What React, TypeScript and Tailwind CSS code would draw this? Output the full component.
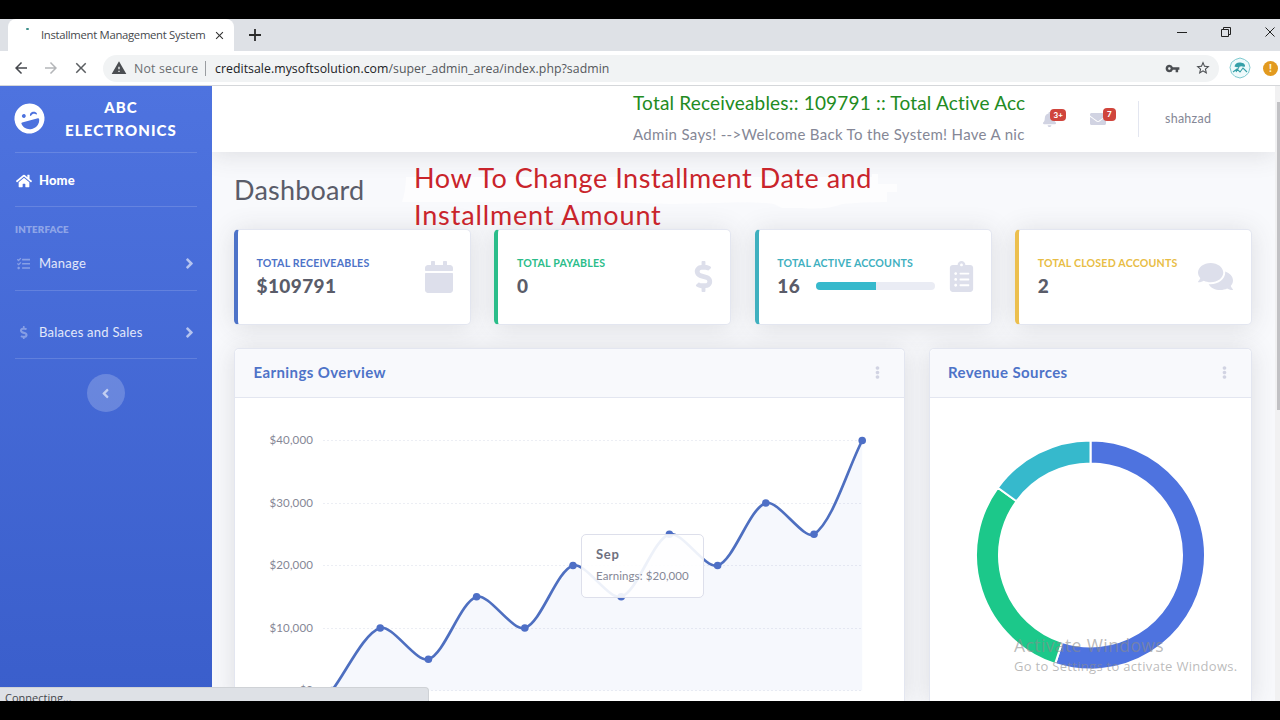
import type { ReactNode } from "react";
import clsx from "clsx";
import {
  FaAngleLeft,
  FaAngleRight,
  FaBell,
  FaCalendar,
  FaClipboardList,
  FaComments,
  FaDollarSign,
  FaEllipsisV,
  FaEnvelope,
  FaHome,
  FaLaughWink,
  FaTasks,
} from "react-icons/fa";
import { MdArrowBack, MdArrowForward, MdClose, MdStarBorder, MdVpnKey, MdWarning } from "react-icons/md";

const earnings = [0, 10, 5, 15, 10, 20, 15, 25, 20, 30, 25, 40];

const CHART = { left: 97, top: 42.5, bottom: 292.5, step: 48.2 };

function chartPoints() {
  return earnings.map((v, i) => ({
    x: CHART.left + i * CHART.step,
    y: CHART.bottom - (v / 40) * (CHART.bottom - CHART.top),
  }));
}

// Smooth curve through the points, control points kept inside the plot area
function curvePath(tension = 0.3) {
  const pts = chartPoints();
  const clamp = (y: number) => Math.min(CHART.bottom, Math.max(CHART.top, y));
  const ctrl = pts.map((p, i) => {
    const prev = pts[i - 1] ?? p;
    const next = pts[i + 1] ?? p;
    const d01 = Math.hypot(p.x - prev.x, p.y - prev.y);
    const d12 = Math.hypot(next.x - p.x, next.y - p.y);
    const fa = (tension * d01) / (d01 + d12);
    const fb = (tension * d12) / (d01 + d12);
    return {
      in: [p.x - fa * (next.x - prev.x), clamp(p.y - fa * (next.y - prev.y))],
      out: [p.x + fb * (next.x - prev.x), clamp(p.y + fb * (next.y - prev.y))],
    };
  });
  return pts
    .map((p, i) => (i === 0 ? `M${p.x},${p.y}` : `C${ctrl[i - 1].out} ${ctrl[i].in} ${p.x},${p.y}`))
    .join(" ");
}

function BrowserTabs() {
  return (
    <div className="flex h-8 items-start bg-[#dee1e6] pl-2 font-['Open_Sans',sans-serif]">
      <div className="relative flex h-8 w-[226px] items-center rounded-t-lg bg-white pl-[33px]">
        <span className="absolute left-[18px] top-[9px] h-[2px] w-[3px] rounded-full bg-[#3d8f8a]" />
        <span className="whitespace-nowrap text-[11.3px] tracking-[-0.3px] text-[#45484c]">
          Installment Management System
        </span>
        <MdClose className="absolute left-[205px] top-[10px] size-[13px] text-[#333]" />
      </div>
      <svg className="ml-[15px] mt-[10px] size-3" viewBox="0 0 12 12" stroke="#2b2b2b" strokeWidth="1.8">
        <path d="M6 0v12M0 6h12" />
      </svg>
      <div className="ml-auto mt-[7px] flex items-center gap-[34px] pr-[5px]">
        <svg className="h-3 w-[10px]" viewBox="0 0 10 12" stroke="#222">
          <path d="M0 6.5h10" />
        </svg>
        <svg className="size-[10px]" viewBox="0 0 10 10" fill="none" stroke="#222">
          <path d="M.5 2.5h7v7h-7zM2.5 2.5v-2h7v7h-2" />
        </svg>
        <svg className="size-[10px]" viewBox="0 0 10 10" stroke="#222">
          <path d="M.5.5l9 9M9.5.5l-9 9" />
        </svg>
      </div>
    </div>
  );
}

function ExtensionBadge() {
  return (
    <svg className="size-[22px] shrink-0" viewBox="0 0 22 22" fill="none">
      <path
        d="M11 1l4.5 1.5L19.5 5.5 21 10.5 19.5 16 15.5 19.5 11 21 6 19.5 2.5 16 1 10.5 2.5 5.5 6.5 2.5z"
        fill="#eefafb"
        stroke="#6fc3ca"
        strokeWidth="0.9"
      />
      <path d="M5.5 9.5C6 6 9 5 11.5 5.5c3 .2 5 2 4.5 4-2 .8-3-.6-4.5 0-2 .8-4 1-6 0z" fill="#35a0a8" />
      <path d="M4 15l4-3 3 3 3-4 4 4M10 10l-3 5" stroke="#35a0a8" strokeWidth="1.1" />
    </svg>
  );
}

function AddressBar() {
  return (
    <div className="flex h-[35px] items-center border-b border-[#d5d7da] bg-white font-['Open_Sans',sans-serif]">
      <div className="flex w-[103px] items-center gap-3 pl-3">
        <MdArrowBack className="size-[18px] text-[#45484d]" />
        <MdArrowForward className="size-[18px] text-[#b4b6b9]" />
        <MdClose className="size-[18px] text-[#5a5d61]" />
      </div>
      <div className="flex h-[27px] w-[1116px] items-center rounded-full bg-[#f1f3f4] pl-2">
        <MdWarning className="size-4 text-[#4b4e52]" />
        <span className="ml-[7px] w-[65px] whitespace-nowrap pt-[2px] text-[12.3px] tracking-[0.2px] text-[#6a6d71]">
          Not secure
        </span>
        <span className="ml-[6px] h-[15px] w-px bg-[#9a9da1]" />
        <span className="ml-[9px] whitespace-nowrap pt-[2px] text-[12.3px] tracking-[0.04px] text-[#55585c]">
          <span className="text-[#202124]">creditsale.mysoftsolution.com</span>/super_admin_area/index.php?sadmin
        </span>
        <MdVpnKey className="ml-auto size-[15px] text-[#4b4e52]" />
        <MdStarBorder className="ml-[15px] mr-2 size-4 text-[#4b4e52]" />
      </div>
      <div className="ml-[10px] flex items-center gap-3">
        <ExtensionBadge />
        <span className="flex size-[15px] shrink-0 items-center justify-center rounded-full bg-[#e29a1f] text-[10px] font-bold leading-none text-[#fff3d0]">
          !
        </span>
      </div>
    </div>
  );
}

function Divider() {
  return <div className="mx-[15px] h-px shrink-0 bg-white/15" />;
}

interface NavItemProps {
  icon: ReactNode;
  label: string;
  active?: boolean;
  className: string;
}

function NavItem({ icon, label, active, className }: NavItemProps) {
  return (
    <div className={clsx("flex shrink-0 items-center pl-[15px] pr-[14px]", className)}>
      <span
        className={clsx("flex w-[17px] justify-center", active ? "text-[16px] text-white" : "text-[13.5px] text-white/35")}
      >
        {icon}
      </span>
      <span
        className={clsx(
          "ml-[7px] whitespace-nowrap text-[13px]",
          active ? "font-black tracking-[0.1px] text-white" : "tracking-[0.24px] text-white/85"
        )}
      >
        {label}
      </span>
      {!active && <FaAngleRight className="ml-auto size-[17px] text-white/60" />}
    </div>
  );
}

function Sidebar() {
  return (
    <aside className="flex w-[211.5px] shrink-0 flex-col bg-gradient-to-b from-[#4e73df] to-[#3a5ecb]">
      <div className="flex h-[66px] shrink-0 items-center pl-[14px]">
        <FaLaughWink className="size-[31px] -translate-y-px -rotate-[15deg] text-white" />
        <div className="ml-[14px] w-[124px] text-center text-[15px] font-black leading-[23px] tracking-[1.1px] text-white">
          ABC ELECTRONICS
        </div>
      </div>
      <Divider />
      <NavItem active icon={<FaHome />} label="Home" className="h-[53px] pt-[2px]" />
      <Divider />
      <div className="mt-[15px] h-[14px] shrink-0 pl-[15px] text-[9.8px] font-extrabold leading-[14px] tracking-[0.15px] text-white/40">
        INTERFACE
      </div>
      <NavItem icon={<FaTasks />} label="Manage" className="mb-[10px] mt-[11px] h-[33px]" />
      <Divider />
      <NavItem icon={<FaDollarSign />} label="Balaces and Sales" className="h-[67px] pt-4" />
      <Divider />
      <div className="mx-auto mt-[15px] flex size-[38px] shrink-0 items-center justify-center rounded-full bg-white/20">
        <FaAngleLeft className="size-[15px] text-white/60" />
      </div>
    </aside>
  );
}

function Topbar() {
  return (
    <header className="relative z-10 flex h-[66px] shrink-0 items-center bg-white pl-[421.5px] shadow-[0_2px_26px_rgba(58,59,69,0.15)]">
      <div className="w-[394px] whitespace-nowrap">
        <p className="h-[30px] text-[19px] leading-[28px] tracking-[0.19px] text-[#228b22]">
          Total Receiveables:: 109791 :: Total Active Acc
        </p>
        <p className="h-[30px] text-[15px] leading-[31px] tracking-[0.32px] text-[#858796]">
          Admin Says! --&gt;Welcome Back To the System! Have A nic
        </p>
      </div>
      <div className="relative ml-[15px] text-[#d1d3e2]">
        <FaBell className="size-[15px]" />
        <span className="absolute -top-[3px] left-2 rounded-[4px] bg-[#d0453c] px-[3.5px] text-[8px] font-black leading-[12.5px] text-white">
          3+
        </span>
      </div>
      <div className="relative ml-[33px] text-[#d1d3e2]">
        <FaEnvelope className="size-4" />
        <span className="absolute -top-[3px] left-[13px] rounded-[4px] bg-[#d0453c] px-1 text-[8px] font-black leading-[12.5px] text-white">
          7
        </span>
      </div>
      <div className="ml-8 h-9 w-px bg-[#e3e6f0]" />
      <span className="ml-[26px] text-[12.5px] tracking-[0.25px] text-[#858796]">shahzad</span>
    </header>
  );
}

interface StatCardProps {
  title: string;
  value: string;
  border: string;
  color: string;
  icon: ReactNode;
  progress?: boolean;
}

function StatCard({ title, value, border, color, icon, progress }: StatCardProps) {
  return (
    <div
      className={clsx(
        "flex h-[95.5px] items-center rounded-[5px] border border-l-4 border-[#e3e6f0] bg-white pl-[18.5px] pr-[18px] shadow-[0_2px_26px_rgba(58,59,69,0.15)]",
        border
      )}
    >
      <div className="flex-1">
        <div className={clsx("whitespace-nowrap text-[10.6px] font-bold leading-[15px] tracking-[0.2px]", color)}>{title}</div>
        <div className="mt-[3px] flex items-center">
          <span className="text-[19px] font-black leading-[23px] tracking-[0.4px] text-[#5a5c69]">{value}</span>
          {progress && (
            <div className="ml-4 h-2 w-[119px] shrink-0 overflow-hidden rounded-full bg-[#eaecf4]">
              <div className="h-full w-1/2 bg-[#36b9cc]" />
            </div>
          )}
        </div>
      </div>
      <span className="text-[#dddfeb]">{icon}</span>
    </div>
  );
}

interface PanelProps {
  title: string;
  className: string;
  children: ReactNode;
}

function Panel({ title, className, children }: PanelProps) {
  return (
    <section
      className={clsx(
        "shrink-0 rounded-t-[5px] border border-b-0 border-[#e3e6f0] bg-white shadow-[0_2px_26px_rgba(58,59,69,0.15)]",
        className
      )}
    >
      <div className="flex h-[49px] items-center justify-between rounded-t-[5px] border-b border-[#e3e6f0] bg-[#f8f9fc] pb-px pl-[18.5px] pr-5">
        <h6 className="text-[15px] font-bold tracking-[0.4px] text-[#4e73c8]">{title}</h6>
        <FaEllipsisV className="size-[13px] text-[#d1d3e2]" />
      </div>
      {children}
    </section>
  );
}

function EarningsChart() {
  const line = curvePath();
  const right = CHART.left + 11 * CHART.step;
  return (
    <div className="relative">
      <svg className="block h-[303px] w-[668px]" viewBox="0 0 668 303">
        {[40, 30, 20, 10, 0].map((v, i) => {
          const y = CHART.top + i * 62.5;
          return (
            <g key={v}>
              <text x="78" y={y + 3.5} textAnchor="end" fontSize="11.5" letterSpacing="0.12" fill="#858796">
                {v ? `$${v},000` : "$0"}
              </text>
              <path d={`M88 ${Math.floor(y) + 0.5}H${right}`} stroke="#eceef4" strokeDasharray="2 2" />
            </g>
          );
        })}
        <path d={`${line} V${CHART.bottom} H${CHART.left}Z`} fill="#4e73df" fillOpacity="0.05" />
        <path d={line} fill="none" stroke="#4e6fc0" strokeWidth="2.7" strokeLinejoin="round" />
        {chartPoints().map((p) => (
          <circle key={p.x} cx={p.x} cy={p.y} r="3.8" fill="#4e6fc6" />
        ))}
      </svg>
      <div className="absolute left-[345.5px] top-[136px] h-[64px] w-[123px] rounded-[5px] border border-[#dddfeb] bg-white/90 pl-[14.5px] pt-[9px]">
        <div className="text-[13px] font-bold leading-5 tracking-[0.7px] text-[#6e707e]">Sep</div>
        <div className="mt-[2px] whitespace-nowrap text-[11.5px] leading-5 tracking-[0.08px] text-[#858796]">
          Earnings: $20,000
        </div>
      </div>
    </div>
  );
}

const sources = [
  { share: 55, color: "#4e73df" },
  { share: 30, color: "#1cc88a" },
  { share: 15, color: "#36b9cc" },
];

function RevenueDonut() {
  const cx = 160.5;
  const cy = 157;
  const at = (pct: number, r: number) => {
    const a = (pct / 100) * 2 * Math.PI;
    return `${cx + r * Math.sin(a)} ${cy - r * Math.cos(a)}`;
  };
  let start = 0;
  return (
    <svg className="block h-[303px] w-[321px]" viewBox="0 0 321 303">
      {sources.map((s) => {
        const from = start;
        const to = (start += s.share);
        const large = s.share > 50 ? 1 : 0;
        return (
          <path
            key={s.color}
            d={`M${at(from, 114.5)} A114.5 114.5 0 ${large} 1 ${at(to, 114.5)} L${at(to, 91.5)} A91.5 91.5 0 ${large} 0 ${at(from, 91.5)}Z`}
            fill={s.color}
            stroke="#fff"
            strokeWidth="2"
          />
        );
      })}
    </svg>
  );
}

function Dashboard() {
  return (
    <main className="flex-1 overflow-hidden bg-[#f8f9fc] pl-[22.5px]">
      <h1 className="h-[77px] pt-[19px] text-[27px] leading-[37px] tracking-[0.2px] text-[#5a5c69]">Dashboard</h1>
      <div className="grid w-[1018px] grid-cols-4 gap-[23.5px]">
        <StatCard
          title="TOTAL RECEIVEABLES"
          value="$109791"
          border="border-l-[#4e73c8]"
          color="text-[#4e73c8]"
          icon={<FaCalendar className="-mr-[3px] size-8" />}
        />
        <StatCard
          title="TOTAL PAYABLES"
          value="0"
          border="border-l-[#2bbd8a]"
          color="text-[#2bbd8a]"
          icon={<FaDollarSign className="-mr-[7px] size-[31px]" />}
        />
        <StatCard
          title="TOTAL ACTIVE ACCOUNTS"
          value="16"
          border="border-l-[#3fb0bf]"
          color="text-[#3fb0bf]"
          icon={<FaClipboardList className="-mr-1 size-[31px]" />}
          progress
        />
        <StatCard
          title="TOTAL CLOSED ACCOUNTS"
          value="2"
          border="border-l-[#ecbf4e]"
          color="text-[#e8bd45]"
          icon={<FaComments className="size-[35px]" />}
        />
      </div>
      <div className="mt-[23.5px] flex gap-[24px]">
        <Panel title="Earnings Overview" className="w-[670.5px]">
          <EarningsChart />
        </Panel>
        <Panel title="Revenue Sources" className="w-[323px]">
          <RevenueDonut />
        </Panel>
      </div>
    </main>
  );
}

function Caption() {
  return (
    <div className="absolute left-[402px] top-[160px] z-20 h-[70px] w-[496px]">
      <svg className="absolute inset-0 size-full" viewBox="0 0 496 70" fill="#fdfdfe">
        <path d="M4 17H470V14H476V24H495V32H485V42Q460 42 440 44Q425 50 400 48H380L372 44Q350 41 315 43L270 44L200 42H0Q4 30 4 17Z" />
      </svg>
      <p className="relative -top-px whitespace-nowrap pl-3 text-[27px] leading-[37px] tracking-[0.55px] text-[#c9242b]">
        How To Change Installment Date and
        <br />
        <span className="tracking-[0.85px]">Installment Amount</span>
      </p>
    </div>
  );
}

export default function App() {
  return (
    <div className="relative h-[720px] w-[1280px] overflow-hidden bg-black py-[19px] font-[Lato,'Open_Sans',sans-serif]">
      <BrowserTabs />
      <AddressBar />
      <div className="flex h-[615px] overflow-hidden">
        <Sidebar />
        <div className="flex flex-1 flex-col overflow-hidden">
          <Topbar />
          <Dashboard />
        </div>
        <div className="w-[5px] shrink-0 bg-[#f1f1f2] pl-[2px] pt-4">
          <div className="h-[308px] bg-[#c1c1c4]" />
        </div>
      </div>
      <Caption />
      <div className="absolute left-[1014px] top-[633px] z-20 whitespace-nowrap font-['Open_Sans',sans-serif] text-[#8c8c8c]/60">
        <p className="text-[17.5px] leading-6 tracking-[0.4px]">Activate Windows</p>
        <p className="text-[13px] leading-[19px] tracking-[0.3px]">Go to Settings to activate Windows.</p>
      </div>
      <div className="absolute left-0 top-[687px] z-20 h-[14px] w-[429px] overflow-hidden rounded-tr-[4px] border-r border-t border-[#cfd2d6] bg-[#dee1e6] pl-[5px] font-['Open_Sans',sans-serif] text-[11px] leading-[20px] text-[#45484c]">
        Connecting...
      </div>
    </div>
  );
}
